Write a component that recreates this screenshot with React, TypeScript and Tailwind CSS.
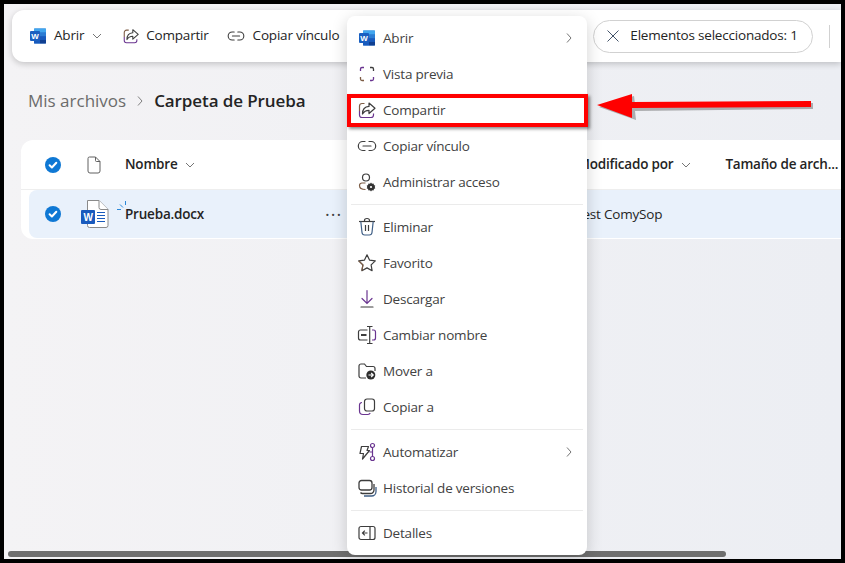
import React from "react";

const D = "#3d3d3d";
const P = "#6a3590";
const O = "#7d5c45";
const B = "#3f5f86";

function WordIcon({ className }: { className: string }) {
  return (
    <svg viewBox="0 0 16 16" className={className}>
      <rect x="4" y="0.5" width="12" height="15" rx="1" fill="#2b7cd3" />
      <rect x="4" y="0.5" width="12" height="4" fill="#41a5ee" />
      <rect x="10" y="4.5" width="6" height="3.7" fill="#2b7cd3" />
      <rect x="10" y="8.2" width="6" height="3.7" fill="#185abd" />
      <rect x="4" y="8.2" width="6" height="7.3" fill="#185abd" />
      <rect x="10" y="11.9" width="6" height="3.6" fill="#103f91" />
      <rect x="0" y="3" width="10" height="10" rx="1" fill="#1a5fc0" />
      <text x="5" y="10.8" textAnchor="middle" fontSize="8" fontWeight="700" fill="#fff" fontFamily="Liberation Sans, sans-serif">W</text>
    </svg>
  );
}

function Share({ className }: { className: string }) {
  return (
    <svg viewBox="0 0 20 20" fill="none" className={className} strokeWidth="1.2">
      <path d="M7.5 3.5H5A2.5 2.5 0 0 0 2.500 6v5" stroke={O} />
      <path d="M12 3l6 5.200-6 5.300v-3.200c-3 0-5 1-6.500 3.700 0-4.400 2.200-7.300 6.500-7.600V3z" stroke={D} strokeLinejoin="round" />
      <path d="M2.500 11v4A2.500 2.500 0 0 0 5 17.500h9a2.500 2.500 0 0 0 2.500-2.500v-1.500" stroke={P} />
    </svg>
  );
}

function LinkI({ className }: { className: string }) {
  return (
    <svg viewBox="0 0 20 20" fill="none" stroke={D} strokeWidth="1.2" strokeLinecap="round" className={className}>
      <path d="M8 5.500H5.800a4.500 4.500 0 0 0 0 9H8" />
      <path d="M12 5.500h2.200a4.500 4.500 0 0 1 0 9H12" />
      <path d="M6 10h8" />
    </svg>
  );
}

function Chevron({ className }: { className: string }) {
  return (
    <svg viewBox="0 0 10 6" fill="none" stroke="#757575" strokeWidth="1" className={className}>
      <path d="M1 1l4 4 4-4" />
    </svg>
  );
}

function ChevronRight() {
  return (
    <svg viewBox="0 0 6 10" fill="none" stroke="#757575" strokeWidth="1" className="h-[10px] w-[6px]">
      <path d="M1 0.500l4 4.500-4 4.500" />
    </svg>
  );
}

function Check() {
  return (
    <span className="flex h-[16px] w-[16px] items-center justify-center rounded-full bg-[#0f78d4]">
      <svg viewBox="0 0 16 16" fill="none" stroke="#fff" strokeWidth="2" strokeLinecap="round" strokeLinejoin="round" className="h-[16px] w-[16px]">
        <path d="M4.600 8.300l2.300 2.200 4.400-4.800" />
      </svg>
    </span>
  );
}

function Preview() {
  return (
    <svg viewBox="0 0 20 20" fill="none" strokeWidth="1.3" className="h-[20px] w-[20px]">
      <path d="M7 3.500H5A1.500 1.500 0 0 0 3.500 5v2" stroke={P} />
      <path d="M13 3.500h2A1.500 1.500 0 0 1 16.500 5v2" stroke={D} />
      <path d="M7 16.500H5A1.500 1.500 0 0 1 3.500 15v-2" stroke={O} />
      <path d="M13 16.500h2a1.500 1.500 0 0 0 1.500-1.500v-2" stroke={P} />
    </svg>
  );
}

function Manage() {
  return (
    <svg viewBox="0 0 20 20" fill="none" stroke={D} strokeWidth="1.2" className="h-[20px] w-[20px]">
      <circle cx="9" cy="5.500" r="3.500" />
      <path d="M8.500 11H5a2.500 2.500 0 0 0-2.500 2.500c0 2.500 2.500 4 6 4" stroke={O} />
      <path d="M14 10.500l1 1.200 1.500-.3.500 1.500 1.300.8-.6 1.300.6 1.300-1.300.8-.5 1.400-1.500-.3-1 1.200-1-1.200-1.500.3-.5-1.400-1.300-.8.6-1.300-.6-1.300 1.300-.8.5-1.500 1.500.3z" fill="#333" stroke="none" />
      <circle cx="14" cy="15" r="1.100" fill="#fff" stroke="none" />
    </svg>
  );
}

function Trash() {
  return (
    <svg viewBox="0 0 20 20" fill="none" stroke={D} strokeWidth="1.2" className="h-[20px] w-[20px]">
      <path d="M2 4.500h16" />
      <path d="M7.500 4.500V3.500a2.500 2 0 0 1 5 0v1" />
      <path d="M3.800 4.500l1.200 11a2.800 2.800 0 0 0 2.700 2.500h4.600a2.800 2.800 0 0 0 2.700-2.500l1.200-11" stroke={B} />
      <path d="M8.500 8v6M11.500 8v6" />
    </svg>
  );
}

function Star() {
  return (
    <svg viewBox="0 0 20 20" fill="none" stroke={D} strokeWidth="1.2" strokeLinejoin="round" className="h-[20px] w-[20px]">
      <path d="M10 1.800l2.500 5.300 5.800.8-4.200 4 1 5.800-5.100-2.800-5.100 2.800 1-5.800-4.200-4 5.800-.8L10 1.800z" />
      <path d="M4.900 17.700l1-5.800-4.200-4" stroke={O} />
    </svg>
  );
}

function Download() {
  return (
    <svg viewBox="0 0 20 20" fill="none" strokeWidth="1.2" strokeLinecap="round" className="h-[20px] w-[20px]">
      <path d="M10 1.500v12.500M5 9.500l5 5 5-5" stroke={P} />
      <path d="M4 18h12" stroke={D} />
    </svg>
  );
}

function Rename() {
  return (
    <svg viewBox="0 0 20 20" fill="none" stroke={D} strokeWidth="1.2" className="h-[20px] w-[20px]">
      <path d="M10.500 5H3.500A2 2 0 0 0 1.500 7v6a2 2 0 0 0 2 2h7" />
      <path d="M15 5h1.500a2 2 0 0 1 2 2v6a2 2 0 0 1-2 2H15" stroke={P} />
      <path d="M10 1.500h5.500M10 18.500h5.500M12.700 1.500v17" />
      <path d="M4 10h5.500" strokeWidth="2" />
    </svg>
  );
}

function MoveI() {
  return (
    <svg viewBox="0 0 20 20" fill="none" stroke={D} strokeWidth="1.2" className="h-[20px] w-[20px]">
      <path d="M9 17H4a2 2 0 0 1-2-2V5a2 2 0 0 1 2-2h3.500l2 2.500H16a2 2 0 0 1 2 2V10" />
      <circle cx="13.800" cy="14" r="4.500" fill="#2e2e2e" stroke="none" />
      <path d="M11.500 14h4.500M14.200 12l2 2-2 2" stroke="#fff" />
    </svg>
  );
}

function CopyI() {
  return (
    <svg viewBox="0 0 20 20" fill="none" stroke={D} strokeWidth="1.2" className="h-[20px] w-[20px]">
      <rect x="7.500" y="2" width="10" height="12" rx="2.500" />
      <path d="M5 5.500A2.500 2.500 0 0 0 2.500 8v6A3.500 3.500 0 0 0 6 17.500h5a2.500 2.500 0 0 0 2.200-1.500" stroke={P} />
    </svg>
  );
}

function Automate() {
  return (
    <svg viewBox="0 0 20 20" fill="none" stroke={D} strokeWidth="1.2" className="h-[20px] w-[20px]">
      <path d="M4.500 4.500H11.500L10 8.500h2.500l-7 8.500 1-5.500H3L4.500 4.500z" strokeLinejoin="round" />
      <circle cx="15.500" cy="3.500" r="2" stroke={P} />
      <circle cx="15.500" cy="16.500" r="2" stroke={P} />
      <path d="M15.500 5.500v9M12.500 10h3" stroke={P} />
    </svg>
  );
}

function History() {
  return (
    <svg viewBox="0 0 20 20" fill="none" stroke={D} strokeWidth="1.3" className="h-[20px] w-[20px]">
      <rect x="2" y="2.500" width="13" height="9.500" rx="2.500" />
      <path d="M3.500 14.500a2.500 2.500 0 0 0 2 1h8a3.500 3.500 0 0 0 3.500-3.500V6" />
      <path d="M7 18h7.500a4.500 4.500 0 0 0 4.500-4.500V9" stroke={B} />
    </svg>
  );
}

function Details() {
  return (
    <svg viewBox="0 0 20 20" fill="none" stroke={D} strokeWidth="1.2" className="h-[20px] w-[20px]">
      <rect x="2" y="3.500" width="16" height="13" rx="2" />
      <path d="M13 3.500v13" />
      <path d="M5.500 10h5M7.800 7.700l-2.300 2.300 2.300 2.300" />
    </svg>
  );
}

function DocIcon() {
  return (
    <svg viewBox="0 0 28 28" fill="none" className="h-[28px] w-[28px]">
      <path d="M6.500 0.500H18l9 9v16a2 2 0 0 1-2 2H8.500a2 2 0 0 1-2-2V0.500z" fill="#fff" stroke="#8a8a8a" />
      <path d="M18 0.500v7a2 2 0 0 0 2 2h7" fill="#fff" stroke="#8a8a8a" />
      <path d="M16 12.500h8M16 15.500h8M16 18.500h8M16 21.500h8" stroke="#185abd" strokeWidth="1" />
      <rect x="0" y="10" width="14" height="14" rx="1" fill="#185abd" />
      <text x="7" y="21" textAnchor="middle" fontSize="10" fontWeight="700" fill="#fff" fontFamily="Liberation Sans, sans-serif">W</text>
    </svg>
  );
}

type Item = { label: string; icon: React.ReactNode; sub?: boolean };

const groups: Item[][] = [
  [
    { label: "Abrir", icon: <WordIcon className="h-[16px] w-[16px]" />, sub: true },
    { label: "Vista previa", icon: <Preview /> },
    { label: "Compartir", icon: <Share className="h-[20px] w-[20px]" /> },
    { label: "Copiar vínculo", icon: <LinkI className="h-[20px] w-[20px]" /> },
    { label: "Administrar acceso", icon: <Manage /> },
  ],
  [
    { label: "Eliminar", icon: <Trash /> },
    { label: "Favorito", icon: <Star /> },
    { label: "Descargar", icon: <Download /> },
    { label: "Cambiar nombre", icon: <Rename /> },
    { label: "Mover a", icon: <MoveI /> },
    { label: "Copiar a", icon: <CopyI /> },
  ],
  [
    { label: "Automatizar", icon: <Automate />, sub: true },
    { label: "Historial de versiones", icon: <History /> },
  ],
  [{ label: "Detalles", icon: <Details /> }],
];

export default function App() {
  return (
    <div
      className="relative h-[563px] w-[845px] overflow-hidden border-4 border-black bg-gradient-to-r from-[#f4f3f5] to-[#eceef3] text-[13.5px] tracking-[-0.2px] text-[#242424]"
      style={{ fontFamily: '"Open Sans", "Noto Sans", sans-serif' }}
    >
      <div className="flex h-full flex-col pl-[8px] pt-[6px]">
        {/* Command bar */}
        <div className="flex h-[52px] items-center rounded-l-[12px] bg-white pl-[18px] shadow-[0_2px_6px_rgba(0,0,0,0.2)]">
          <WordIcon className="h-[16px] w-[16px]" />
          <span className="ml-[8px] -translate-y-px">Abrir</span>
          <Chevron className="ml-[8px] h-[6px] w-[10px]" />
          <Share className="ml-[20px] h-[18px] w-[18px]" />
          <span className="ml-[6px] -translate-y-px">Compartir</span>
          <LinkI className="ml-[18px] h-[18px] w-[18px]" />
          <span className="ml-[8px] -translate-y-px">Copiar vínculo</span>
          <div className="ml-[254px] flex h-[33px] w-[220px] items-center rounded-full border border-[#d1d1d1] pl-[13px]">
            <svg viewBox="0 0 12 12" fill="none" stroke="#44546a" strokeWidth="1" className="h-[12px] w-[12px]">
              <path d="M0.500 0.500l11 11M11.500 0.500l-11 11" />
            </svg>
            <span className="ml-[11px] -translate-y-px whitespace-nowrap">Elementos seleccionados: 1</span>
          </div>
          <div className="ml-[16px] h-[23px] w-px bg-[#d1d1d1]" />
        </div>

        {/* Breadcrumb */}
        <div className="ml-[16px] mt-[27px] flex h-[24px] items-center text-[17px] tracking-[0px]">
          <span className="text-[#6b6b6b]">Mis archivos</span>
          <svg viewBox="0 0 6 10" fill="none" stroke="#808080" strokeWidth="1" className="ml-[11px] h-[10px] w-[6px]">
            <path d="M1 0.500l4 4.500-4 4.500" />
          </svg>
          <span className="ml-[11px] font-semibold tracking-[-0.1px] text-[#242424]">Carpeta de Prueba</span>
        </div>

        {/* Table */}
        <div className="ml-[9px] mt-[27px] flex h-[99px] flex-col rounded-l-[12px] bg-white">
          <div className="flex h-[50px] flex-none items-center border-b border-[#eeeeee] font-semibold">
            <div className="ml-[24px]"><Check /></div>
            <svg viewBox="0 0 14 18" fill="none" stroke="#616161" className="ml-[26px] h-[18px] w-[14px]">
              <path d="M2.500 1H8.500L13 5.500V15a2 2 0 0 1-2 2H3a2 2 0 0 1-2-2V2.500A1.500 1.500 0 0 1 2.500 1z" />
              <path d="M8.500 1v3.500a1 1 0 0 0 1 1H13" />
            </svg>
            <span className="ml-[24px]">Nombre</span>
            <Chevron className="ml-[7px] h-[6px] w-[10px]" />
            <span className="ml-[383px] whitespace-nowrap">Modificado por</span>
            <Chevron className="ml-[8px] h-[6px] w-[10px]" />
            <span className="ml-[34px] whitespace-nowrap">Tamaño de arch...</span>
          </div>
          <div className="ml-[8px] flex h-[48px] flex-none items-center rounded-l-[8px] bg-[#e9f1fb]">
            <div className="ml-[16px]"><Check /></div>
            <div className="relative ml-[20px]">
              <DocIcon />
            </div>
            <div className="relative ml-[16px] font-semibold">
              <span>Prueba.docx</span>
              <svg viewBox="0 0 10 10" fill="none" stroke="#2b88d8" strokeWidth="1" className="absolute -left-[8px] -top-[3px] h-[10px] w-[10px]">
                <path d="M0 8.500h4M3 3.500L6 6.500M8.500 0v4" />
              </svg>
            </div>
            <span className="ml-[121px] text-[18px] leading-none tracking-[1px] text-[#424242]">···</span>
            <span className="ml-[233px] whitespace-nowrap">Test ComySop</span>
          </div>
        </div>

        {/* Scrollbar */}
        <div className="mb-[2px] -ml-[4px] mt-auto h-[6px] w-[718px] flex-none rounded-full bg-[#6f6f6f]" />
      </div>

      {/* Context menu */}
      <div className="absolute left-[343px] top-[12px] w-[240px] rounded-[8px] bg-white py-[4px] text-[#424242] shadow-[0_4px_16px_rgba(0,0,0,0.18)]">
        {groups.map((g, i) => (
          <div key={i}>
            {i > 0 && (
              <div className="flex h-[9px] items-center px-[4px]">
                <div className="h-px w-full bg-[#ebebeb]" />
              </div>
            )}
            {g.map((it) => (
              <div key={it.label} className="flex h-[36px] items-center pl-[10px] pr-[15px]">
                <span className="flex w-[20px] items-center justify-center">{it.icon}</span>
                <span className="ml-[6px] flex-1 whitespace-nowrap">{it.label}</span>
                {it.sub && <ChevronRight />}
              </div>
            ))}
          </div>
        ))}
      </div>

      {/* Annotation: red highlight box */}
      <div className="absolute left-[343px] top-[90px] h-[33px] w-[241px] border-[4px] border-[#ff0000] shadow-[2px_2px_3px_rgba(0,0,0,0.45)]" />

      {/* Annotation: red arrow */}
      <svg viewBox="0 0 220 30" className="absolute left-[592px] top-[86px] h-[30px] w-[220px]">
        <path d="M1 15L36 4l1 8 178-1v6L37 19l1 9z" fill="#5a5a5a" opacity="0.45" transform="translate(2 2)" />
        <path d="M1 15L36 4l0 8 179-1v6L36 18l0 10z" fill="#ff0000" />
      </svg>
    </div>
  );
}
